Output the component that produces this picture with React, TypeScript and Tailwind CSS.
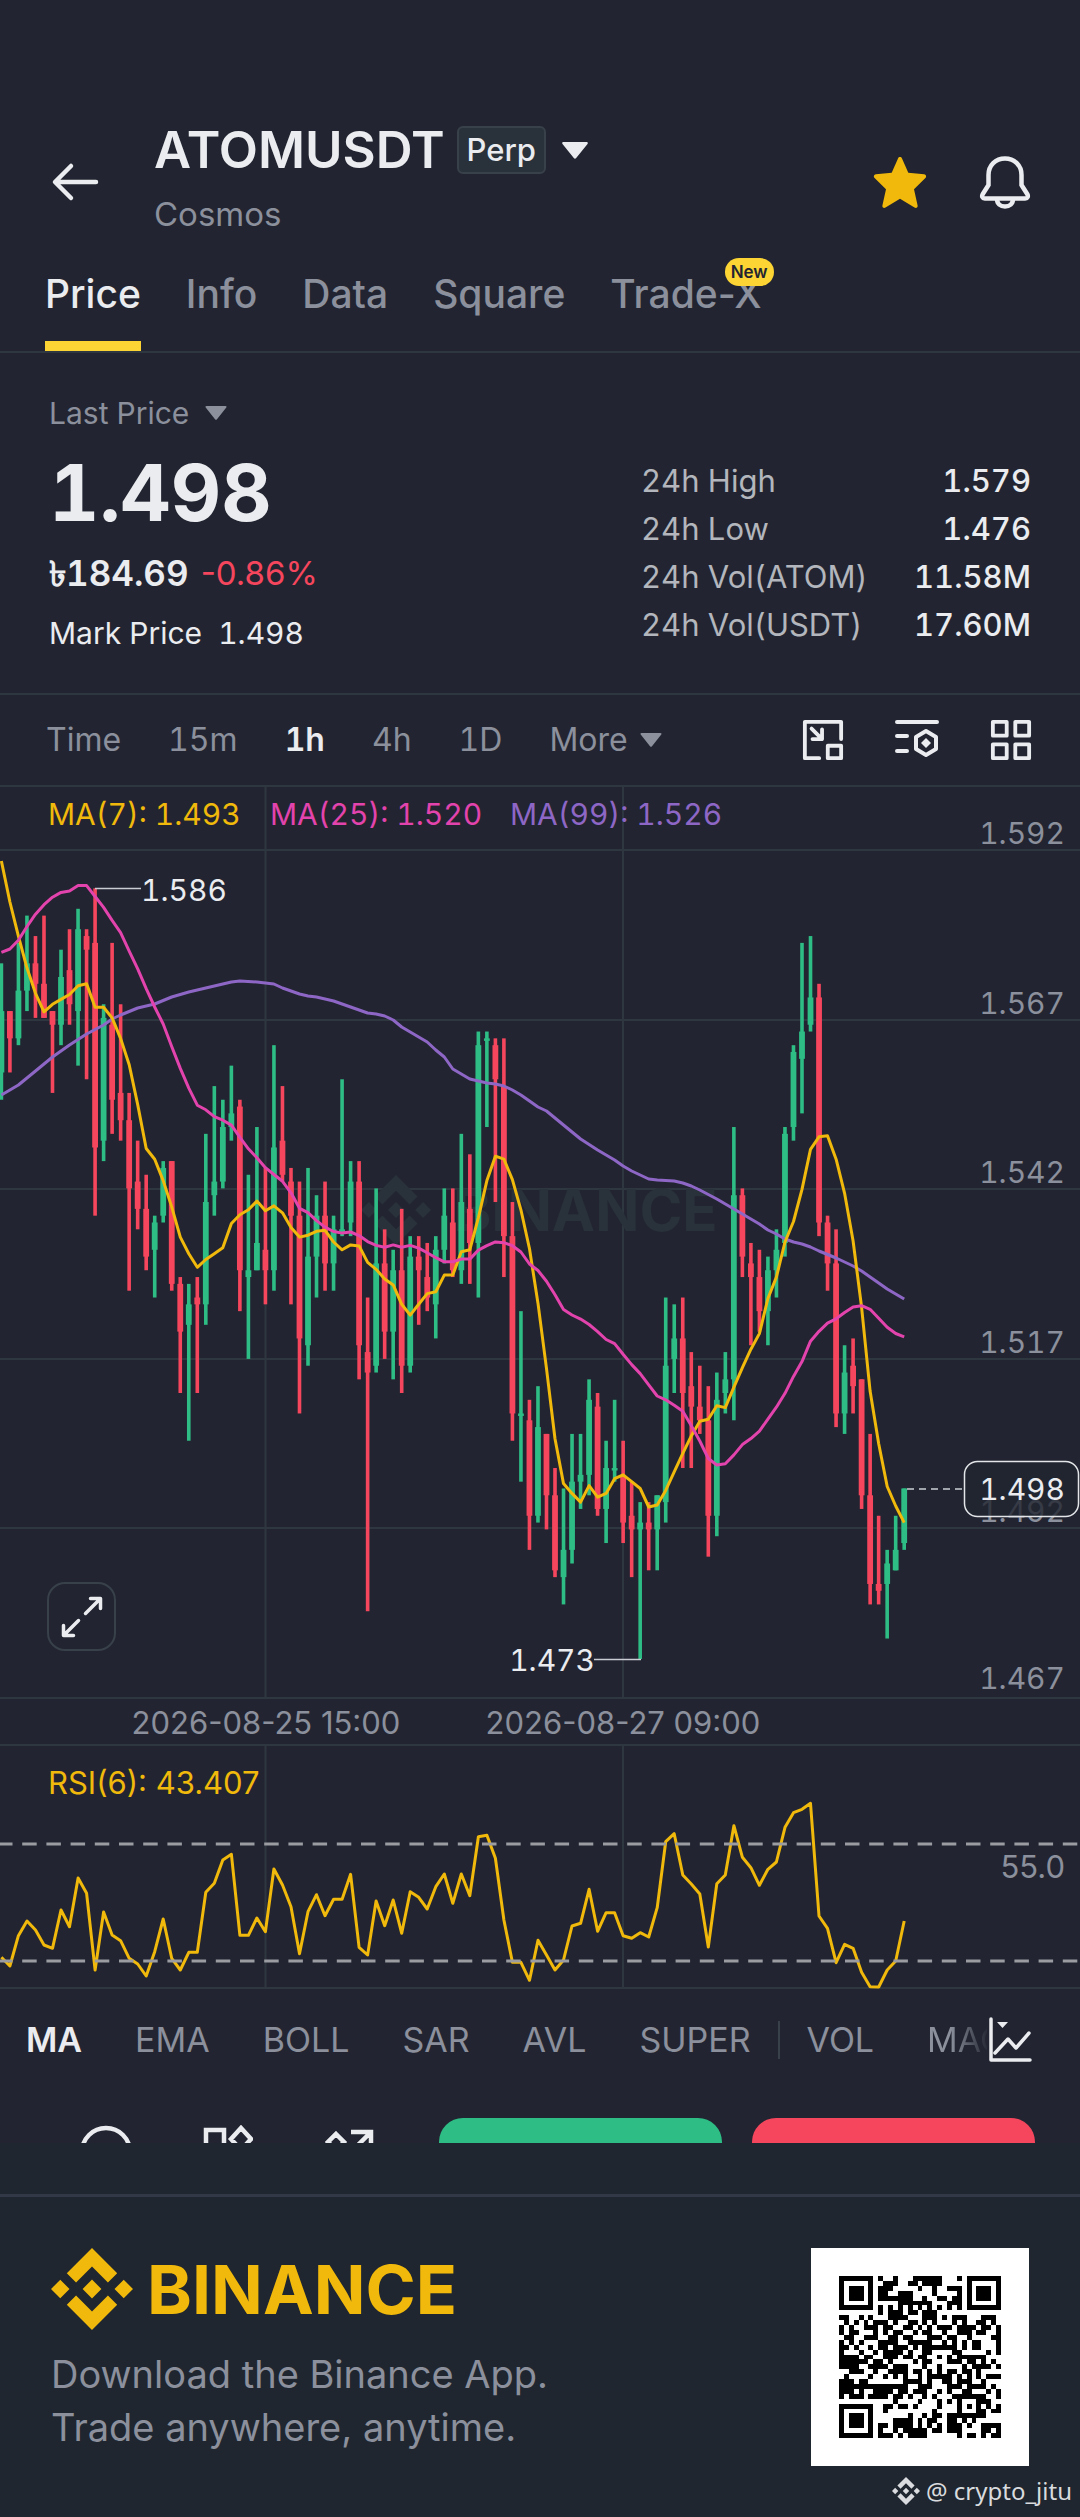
import React from "react";

type Candle = [up: 0 | 1, high: number, top: number, bottom: number, low: number];

/* Hourly candles; prices are counted in ticks of 0.001 below 1.592. */
const candles: Candle[] = [
  [1, 17, 24, 33, 37], [0, 24, 24, 28, 33], [1, 14, 21, 28, 29], [1, 10, 17, 21, 24], [0, 13, 17, 20, 25],
  [0, 10, 20, 25, 25], [0, 24, 24, 26, 36], [1, 15, 19, 26, 29], [0, 12, 18, 23, 26], [1, 9, 12, 24, 32],
  [0, 12, 13, 15, 34], [0, 6, 14, 44, 54], [1, 23, 25, 43, 46], [0, 14, 26, 37, 42], [0, 23, 36, 40, 43],
  [0, 36, 40, 50, 65], [0, 43, 49, 53, 56], [0, 48, 53, 60, 62], [1, 54, 55, 59, 66], [1, 46, 47, 54, 55],
  [0, 46, 46, 64, 65], [0, 63, 64, 71, 80], [1, 64, 67, 70, 87], [0, 63, 66, 67, 80], [1, 42, 52, 67, 70],
  [1, 35, 49, 51, 54], [1, 37, 41, 49, 50], [1, 32, 39, 41, 43], [0, 37, 38, 62, 68], [1, 48, 62, 63, 75],
  [1, 41, 58, 62, 62], [0, 47, 59, 62, 67], [1, 29, 44, 62, 65], [0, 35, 43, 48, 49], [0, 47, 49, 54, 67],
  [0, 49, 54, 72, 83], [1, 47, 60, 73, 76], [1, 51, 54, 60, 66], [0, 49, 54, 61, 65], [1, 54, 56, 61, 65],
  [1, 34, 56, 56, 57], [1, 46, 49, 55, 57], [0, 46, 49, 73, 78], [0, 66, 74, 77, 112], [1, 50, 61, 76, 77],
  [0, 56, 61, 71, 75], [1, 59, 62, 71, 78], [0, 53, 62, 76, 80], [1, 57, 60, 76, 77], [0, 57, 60, 62, 70],
  [0, 58, 63, 66, 68], [1, 57, 59, 67, 72], [1, 50, 54, 59, 61], [0, 50, 55, 62, 63], [1, 42, 52, 62, 64],
  [0, 45, 53, 58, 64], [1, 27, 29, 58, 66], [1, 27, 28, 28, 41], [0, 28, 29, 34, 52], [0, 28, 35, 57, 63],
  [0, 52, 57, 83, 87], [1, 68, 83, 83, 93], [0, 81, 84, 98, 103], [1, 79, 85, 98, 99], [0, 86, 86, 95, 100],
  [0, 91, 95, 106, 107], [1, 94, 103, 107, 111], [1, 86, 93, 103, 105], [1, 86, 92, 93, 97], [1, 78, 81, 92, 95],
  [0, 80, 82, 97, 98], [1, 87, 91, 97, 102], [1, 81, 91, 91, 93], [0, 87, 92, 99, 102], [0, 93, 98, 100, 107],
  [1, 96, 99, 100, 119], [0, 96, 99, 100, 106], [1, 95, 95, 100, 106], [1, 66, 76, 96, 99], [1, 67, 72, 75, 80],
  [0, 66, 72, 80, 91], [0, 74, 79, 82, 91], [0, 76, 82, 84, 86], [0, 79, 84, 98, 104], [1, 77, 81, 98, 101],
  [1, 74, 78, 80, 83], [1, 41, 51, 78, 84], [0, 50, 51, 60, 63], [0, 58, 61, 63, 73], [0, 59, 63, 68, 71],
  [1, 60, 62, 68, 73], [1, 56, 59, 62, 66], [1, 41, 42, 58, 60], [1, 29, 30, 41, 43], [1, 14, 27, 31, 39],
  [1, 13, 22, 26, 27], [0, 20, 22, 55, 57], [0, 54, 55, 61, 65], [0, 56, 61, 83, 85], [1, 73, 77, 83, 86],
  [0, 72, 76, 79, 83], [0, 78, 78, 95, 97], [0, 86, 95, 108, 111], [0, 98, 108, 109, 111], [1, 103, 105, 108, 116],
  [1, 98, 103, 106, 106], [1, 94, 94, 102, 103],
];

const ma7Start = [2, 8, 13, 17.7, 21.4, 24.1];
const ma25Start = [
  15.4, 14.9, 13.6, 11.6, 9.8, 8.4, 7.3, 6.6, 6.4, 5.6, 5.6, 7.2, 8.8, 10.7, 12.5, 15.2, 17.8, 20.7, 23.4, 25.9, 29.2,
  32.4, 35.3, 37.8,
];

/* Long average as [candle index, chart y]. */
const ma99: [number, number][] = [
  [0, 1095], [2, 1085], [4, 1071], [6, 1057], [8, 1045], [10, 1034], [12, 1025], [13, 1019], [14, 1015], [16, 1008],
  [18, 1004], [20, 997], [22, 992], [24, 988], [26, 984], [27, 982], [28, 981], [30, 982], [32, 984], [33, 988],
  [34, 991], [35, 994], [36, 996], [37, 997], [39, 1001], [41, 1007], [43, 1013], [44, 1014], [45, 1016], [46, 1020],
  [47, 1027], [48, 1032], [50, 1042], [51, 1050], [52, 1057], [53, 1069], [54, 1074], [55, 1079], [56, 1081],
  [57, 1083], [58, 1084], [59, 1086], [60, 1090], [61, 1095], [62, 1101], [63, 1107], [64, 1111], [66, 1125],
  [68, 1139], [70, 1150], [72, 1160], [73, 1166], [74, 1171], [76, 1179], [77, 1180], [79, 1181], [80, 1183],
  [81, 1186], [82, 1190], [84, 1199], [86, 1209], [88, 1219], [89, 1224], [90, 1230], [91, 1234], [92, 1239],
  [93, 1242], [94, 1244], [95, 1247], [96, 1251], [98, 1258], [100, 1266], [101, 1271], [102, 1277], [103, 1283],
  [104, 1289], [105, 1294], [106, 1299],
];

/* RSI curve, three units to a pixel, measured down from y = 1740. */
const rsi = [
  652, 678, 587, 543, 570, 615, 625, 510, 560, 414, 460, 690, 516, 585, 602, 655, 672, 708, 635, 537, 655, 690, 637,
  637, 457, 430, 360, 343, 586, 586, 534, 575, 387, 435, 500, 641, 515, 464, 527, 478, 478, 403, 622, 645, 483, 557,
  480, 580, 455, 472, 507, 440, 402, 490, 402, 467, 290, 286, 355, 540, 667, 667, 721, 601, 645, 690, 660, 558, 550,
  448, 574, 518, 518, 587, 595, 578, 591, 503, 305, 281, 405, 432, 462, 621, 431, 405, 257, 352, 383, 436, 388, 366,
  262, 218, 208, 190, 528, 565, 668, 613, 625, 697, 740, 741, 690, 663, 543,
];

const xOf = (i: number) => 1.4 + i * 8.517;
const yOf = (d: number) => 847.4 + d * 6.82;
const closeOf = (c: Candle) => (c[0] ? c[2] : c[3]);

function average(period: number, start: number[]) {
  return candles
    .map((_, i) => {
      let v = start[i];
      if (v === undefined) {
        const from = Math.max(0, i - period + 1);
        const part = candles.slice(from, i + 1);
        v = part.reduce((s, c) => s + closeOf(c), 0) / part.length;
      }
      return `${xOf(i).toFixed(1)},${yOf(v).toFixed(1)}`;
    })
    .join(" ");
}

const ma7Points = average(7, ma7Start);
const ma25Points = average(25, ma25Start);
const ma99Points = ma99.map(([i, y]) => `${xOf(i).toFixed(1)},${y}`).join(" ");
const rsiPoints = rsi.map((v, i) => `${xOf(i).toFixed(1)},${(1740 + v / 3).toFixed(1)}`).join(" ");

/* Grid line y, label baseline, label. */
const gridRows: [number, number, string][] = [
  [850, 844, "1.592"], [1020, 1014, "1.567"], [1189, 1183, "1.542"],
  [1359, 1353, "1.517"], [1528, 1522, "1.492"], [1698, 1689, "1.467"],
];

function BinanceMark({ className }: { className?: string }) {
  return (
    <svg viewBox="0 0 126.6 126.6" className={className} fill="currentColor" aria-hidden="true">
      <path d="M38.7 53.2 63.3 28.6l24.6 24.6 14.3-14.3L63.3 0 24.4 38.9zM0 63.3 14.3 49l14.3 14.3-14.3 14.3zM38.7 73.4 63.3 98l24.6-24.6 14.3 14.3-38.9 38.9-38.9-38.9zM98 63.3 112.3 49l14.3 14.3-14.3 14.3zM77.8 63.3 63.3 48.8 48.8 63.3l14.5 14.5z" />
    </svg>
  );
}

function Caret({ className }: { className?: string }) {
  return (
    <svg viewBox="0 0 26 17" className={className} fill="currentColor" aria-hidden="true">
      <path d="M1.500 0h23c1.200 0 1.700 1 1 1.900L14.200 16c-.7.9-1.700.9-2.400 0L.5 1.900C-.2 1 .3 0 1.500 0z" />
    </svg>
  );
}

function Header() {
  return (
    <header className="flex items-center px-12 pt-[118px]">
      <button type="button" aria-label="Back" className="w-[106px] shrink-0">
        <svg viewBox="0 0 54 44" className="h-11 w-[54px]" fill="none" stroke="currentColor" strokeWidth="4.500" strokeLinecap="round" strokeLinejoin="round">
          <path d="M48 22H8M23 6 7 22l16 16" />
        </svg>
      </button>
      <div className="flex-1 pb-2">
        <div className="flex h-16 items-center">
          <h1 className="text-[51px] leading-[64px] font-semibold">ATOMUSDT</h1>
          <span className="ml-3 rounded-md border-2 border-[#38404a] bg-[#29313a] px-2 text-[31px] leading-[44px] font-medium">
            Perp
          </span>
          <button type="button" aria-label="Choose pair" className="ml-4">
            <Caret className="h-[17px] w-[26px]" />
          </button>
        </div>
        <p className="mt-2 text-[33px] leading-[48px] text-[#8b909c]">Cosmos</p>
      </div>
      <button type="button" aria-label="Favourite" className="text-[#f0b90b]">
        <svg viewBox="0 0 54 54" className="size-[54px]" fill="currentColor">
          <path d="M25 3.500c.8-1.900 3.200-1.900 4 0l6.300 14.300 15.800 1.500c2 .2 2.700 2.500 1.300 3.800L41 34.300l3.600 16.200c.4 1.900-1.500 3-3.100 2L27 43.700 12.500 52.500c-1.600 1-3.500-.1-3.100-2L13 34.300 1.600 23.100C.2 21.800.9 19.500 2.900 19.300l15.800-1.500z" />
        </svg>
      </button>
      <button type="button" aria-label="Price alert" className="ml-[51px]">
        <svg viewBox="0 0 54 54" className="size-[54px]" fill="none" stroke="currentColor" strokeWidth="4.500">
          <path d="M27 3.500C17.500 3.500 10.500 10.500 10.500 20v10L4.800 39c-1.400 2.300-.4 4.500 2 4.500h40.400c2.400 0 3.400-2.200 2-4.500L43.500 30V20C43.500 10.500 36.500 3.500 27 3.500z" />
          <path d="M19 44c0 5 3.500 7.500 8 7.500s8-2.500 8-7.500" />
        </svg>
      </button>
    </header>
  );
}

function Tabs() {
  return (
    <nav className="flex gap-[45px] border-b-2 border-[#2e3640] px-[45px] text-[39px] leading-[48px] font-medium text-[#8b909c]">
      <button type="button" className="border-b-[10px] border-[#fcd535] pt-6 pb-[23px] text-[#eaecef]">Price</button>
      <button type="button" className="pt-6 pb-[33px]">Info</button>
      <button type="button" className="pt-6 pb-[33px]">Data</button>
      <button type="button" className="pt-6 pb-[33px]">Square</button>
      <button type="button" className="relative pt-6 pb-[33px]">
        Trade-X
        <span className="absolute top-3 -right-3 rounded-full bg-[#fcd535] px-[6px] text-[17px] leading-[28px] font-semibold text-[#222531]">
          New
        </span>
      </button>
    </nav>
  );
}

const stats = [
  ["24h High", "1.579"],
  ["24h Low", "1.476"],
  ["24h Vol(ATOM)", "11.58M"],
  ["24h Vol(USDT)", "17.60M"],
];

function PriceSummary() {
  return (
    <section className="flex justify-between border-b-2 border-[#2e3640] px-[49px] py-10 tabular-nums">
      <div>
        <button type="button" className="flex items-center text-[30px] leading-[40px] text-[#8b909c]">
          Last Price
          <Caret className="ml-4 h-[14px] w-[22px]" />
        </button>
        <p className="mt-4 text-[78px] leading-[88px] font-bold">1.498</p>
        <p className="mt-3 flex gap-3 leading-[48px]">
          <span className="text-[35px] font-semibold">৳184.69</span>
          <span className="text-[33px] text-[#f6465d] proportional-nums">-0.86%</span>
        </p>
        <p className="mt-4 text-[30px] leading-[40px]">Mark Price&nbsp; 1.498</p>
      </div>
      <dl className="mt-16 w-[390px] text-[31px] leading-[48px]">
        {stats.map(([label, value]) => (
          <div key={label} className="flex justify-between">
            <dt className="text-[#b3b6bc]">{label}</dt>
            <dd className="font-medium">{value}</dd>
          </div>
        ))}
      </dl>
    </section>
  );
}

function Timeframes() {
  return (
    <div className="flex h-[92px] items-center border-b-2 border-[#2e3640] pr-12 pl-[46px] text-[32px] leading-[40px] text-[#8b909c] tabular-nums">
      <div className="flex flex-1 gap-[47px]">
        <button type="button">Time</button>
        <button type="button">15m</button>
        <button type="button" className="font-semibold text-[#eaecef]">1h</button>
        <button type="button">4h</button>
        <button type="button">1D</button>
        <button type="button" className="flex items-center">
          More
          <Caret className="ml-3 h-[14px] w-[22px]" />
        </button>
      </div>
      <div className="flex items-center gap-[51px] text-[#eaecef]">
        <button type="button" aria-label="Floating window">
          <svg viewBox="0 0 44 44" className="size-[42px]" fill="none" stroke="currentColor" strokeWidth="4" strokeLinecap="round" strokeLinejoin="round">
            <path d="M41 21V3H3v38h15M27 28h14v13H27zM10 10l11 11M21 11v10H11" />
          </svg>
        </button>
        <button type="button" aria-label="Chart settings">
          <svg viewBox="0 0 44 44" className="size-11" fill="none" stroke="currentColor" strokeWidth="4" strokeLinecap="round" strokeLinejoin="round">
            <path d="M2 4h40M2 18h10M2 33h10M31 13l10 6v12l-10 6-10-6V19z" />
            <path d="m31 20 5 5-5 5-5-5z" fill="currentColor" stroke="none" />
          </svg>
        </button>
        <button type="button" aria-label="Layout">
          <svg viewBox="0 0 44 44" className="size-[42px]" fill="none" stroke="currentColor" strokeWidth="4" strokeLinejoin="round">
            <path d="M3 3h14.500v14.500H3zM26.500 3H41v14.500H26.500zM3 26.500h14.500V41H3zM26.500 26.500H41V41H26.500z" />
          </svg>
        </button>
      </div>
    </div>
  );
}

function PriceChart() {
  return (
    <section className="relative" aria-label="Price chart">
      <svg viewBox="0 787 1080 959" className="block w-full font-[Inter,sans-serif] text-[30px] tabular-nums">
        <g stroke="#2e3640" strokeWidth="2">
          {gridRows.map(([y]) => (
            <path key={y} d={`M0 ${y}H1080`} />
          ))}
          <path d="M265.500 787V1698M623 787V1698M0 1745H1080" />
        </g>
        <g fill="#29313a">
          <svg x="361" y="1175" width="70" height="70" viewBox="0 0 126.6 126.6">
            <path d="M38.7 53.2 63.3 28.6l24.6 24.6 14.3-14.3L63.3 0 24.4 38.9zM0 63.3 14.3 49l14.3 14.3-14.3 14.3zM38.7 73.4 63.3 98l24.6-24.6 14.3 14.3-38.9 38.9-38.9-38.9zM98 63.3 112.3 49l14.3 14.3-14.3 14.3zM77.8 63.3 63.3 48.8 48.8 63.3l14.5 14.5z" />
          </svg>
          <text x="453" y="1231" className="text-[58px] font-bold">BINANCE</text>
        </g>
        {candles.map(([up, high, top, bottom, low], i) => (
          <g key={i} fill={up ? "#2ebd85" : "#f6465d"}>
            <rect x={xOf(i) - 1.8} y={yOf(high)} width="3.600" height={(low - high) * 6.82} />
            <rect x={xOf(i) - 2.9} y={yOf(top)} width="5.800" height={Math.max(2.5, (bottom - top) * 6.82)} />
          </g>
        ))}
        <g fill="none" strokeWidth="3" strokeLinejoin="round">
          <polyline points={ma99Points} stroke="#8e67c6" />
          <polyline points={ma7Points} stroke="#f0b90b" />
          <polyline points={ma25Points} stroke="#e243ac" />
        </g>
        <text x="48" y="825" fill="#f0b90b">MA(7): 1.493</text>
        <text x="270" y="825" fill="#e243ac">MA(25): 1.520</text>
        <text x="510" y="825" fill="#8e67c6">MA(99): 1.526</text>
        <g fill="#8b909c" textAnchor="end">
          {gridRows.map(([, baseline, label]) => (
            <text key={label} x="1065" y={baseline}>{label}</text>
          ))}
        </g>
        <g stroke="#c9ccd2" strokeWidth="1.500" fill="none">
          <path d="M95 888.500H141M594 1659.500H641" />
          <path d="M907 1489H963" strokeDasharray="7 5" stroke="#a0a4ab" strokeWidth="2" />
          <rect x="964.500" y="1461.500" width="114" height="55" rx="13" fill="#222531" fillOpacity="0.800" stroke="#e3e5e8" />
        </g>
        <g fill="#eaecef">
          <text x="141" y="901">1.586</text>
          <text x="595" y="1671" textAnchor="end">1.473</text>
          <text x="1065" y="1500" textAnchor="end">1.498</text>
        </g>
        <g fill="#8b909c" textAnchor="middle" className="text-[31px] proportional-nums">
          <text x="266" y="1734">2026-08-25 15:00</text>
          <text x="623" y="1734">2026-08-27 09:00</text>
        </g>
      </svg>
      <button
        type="button"
        aria-label="Full screen"
        className="absolute bottom-[95px] left-[47px] flex size-[69px] items-center justify-center rounded-[18px] border-2 border-[#38404a]"
      >
        <svg viewBox="0 0 42 42" className="size-[42px]" fill="none" stroke="currentColor" strokeWidth="3.500" strokeLinecap="round" strokeLinejoin="round">
          <path d="M24.500 17.500 39 3M29.500 2.500h10v10M17.500 24.500 3 39M12.500 39.500h-10v-10" />
        </svg>
      </button>
    </section>
  );
}

function RsiChart() {
  return (
    <section aria-label="RSI">
      <svg viewBox="0 1746 1080 243" className="block w-full font-[Inter,sans-serif] text-[31px]">
        <path d="M265.500 1746V1988M623 1746V1988M0 1988H1080" stroke="#2e3640" strokeWidth="2" />
        <polyline points={rsiPoints} fill="none" stroke="#f0b90b" strokeWidth="3" strokeLinejoin="round" />
        <path d="M-2 1844H1080M-2 1961H1080" stroke="#9a9ca1" strokeWidth="3" strokeDasharray="14.500 9.700" />
        <text x="48" y="1794" fill="#f0b90b">RSI(6): 43.407</text>
        <text x="1065" y="1878" fill="#8b909c" textAnchor="end">55.0</text>
      </svg>
    </section>
  );
}

function Indicators() {
  return (
    <div className="flex h-[102px] items-center pr-[47px] pl-[26px] text-[34px] leading-[40px] text-[#8b909c]">
      <div className="flex min-w-0 flex-1 items-center gap-[27px] overflow-hidden">
        <div className="flex gap-[53px]">
          <button type="button" className="font-semibold text-[#eaecef]">MA</button>
          <button type="button">EMA</button>
          <button type="button">BOLL</button>
          <button type="button">SAR</button>
          <button type="button">AVL</button>
          <button type="button">SUPER</button>
        </div>
        <div className="h-[38px] w-[2px] shrink-0 bg-[#38404a]" />
        <div className="flex gap-[53px]">
          <button type="button">VOL</button>
          <button
            type="button"
            className="bg-linear-to-r from-[#8b909c] from-30% to-transparent to-80% bg-clip-text text-transparent"
          >
            MAC
          </button>
        </div>
      </div>
      <button type="button" aria-label="Indicator settings" className="shrink-0 text-[#eaecef]">
        <svg viewBox="0 0 46 46" className="size-[46px]" fill="none" stroke="currentColor" strokeWidth="3.500" strokeLinecap="round" strokeLinejoin="round">
          <path d="M4 2v41h39M8 36l13-14 8 9 13-15" />
          <path d="M10 5h11l-5.500 6z" fill="currentColor" stroke="none" />
        </svg>
      </button>
    </div>
  );
}

function ActionBar() {
  return (
    <div className="flex h-[52px] items-start overflow-hidden px-[45px] pt-[27px]">
      <div className="grid w-[366px] shrink-0 grid-cols-3 justify-items-center pt-[7px]">
        <button type="button" aria-label="More">
          <svg viewBox="0 0 50 50" className="size-[50px]" fill="none" stroke="currentColor" strokeWidth="4.500">
            <circle cx="25" cy="27" r="24" />
          </svg>
        </button>
        <button type="button" aria-label="Tools">
          <svg viewBox="0 0 50 50" className="size-[50px]" fill="none" stroke="currentColor" strokeWidth="4.500">
            <path d="M3 5h18v17H3zM3 29h18v17H3zM28 29h18v17H28zM38 3l10 11-10 11-10-11z" />
          </svg>
        </button>
        <button type="button" aria-label="Leverage">
          <svg viewBox="0 0 50 50" className="size-[50px]" fill="none" stroke="currentColor" strokeWidth="4.500">
            <path d="M11 9l8 8-8 8-8-8zM26 7h20v20M45 8 8 45" />
          </svg>
        </button>
      </div>
      <div className="ml-7 flex flex-1 gap-[30px]">
        <button type="button" aria-label="Long" className="h-24 flex-1 rounded-3xl bg-[#2ebd85]" />
        <button type="button" aria-label="Short" className="h-24 flex-1 rounded-3xl bg-[#f6465d]" />
      </div>
    </div>
  );
}

const QR_SIZE = 33;

function qrPath() {
  let seed = 77;
  let d = "";
  const finder = (r: number, c: number) => {
    const ring = Math.max(Math.abs(r - 3), Math.abs(c - 3));
    return ring === 3 || ring <= 1;
  };
  for (let r = 0; r < QR_SIZE; r++) {
    for (let c = 0; c < QR_SIZE; c++) {
      seed = (seed * 1103515245 + 12345) % 2147483648;
      let on = seed / 2147483648 < 0.52;
      const right = c >= QR_SIZE - 8;
      const low = r >= QR_SIZE - 8;
      if ((r < 8 && (c < 8 || right)) || (low && c < 8)) {
        const rr = low ? r - (QR_SIZE - 7) : r;
        const cc = right ? c - (QR_SIZE - 7) : c;
        on = rr >= 0 && rr < 7 && cc >= 0 && cc < 7 && finder(rr, cc);
      } else if (Math.abs(r - 26) <= 2 && Math.abs(c - 26) <= 2) {
        on = Math.max(Math.abs(r - 26), Math.abs(c - 26)) !== 1;
      } else if (r === 6 || c === 6) {
        on = (r + c) % 2 === 0;
      }
      if (on) d += `M${c} ${r}h1v1h-1z`;
    }
  }
  return d;
}

function Footer() {
  return (
    <footer className="bg-[#1f262f] pt-[51px]">
      <div className="flex justify-between border-t-[3px] border-[#323845] px-[51px] pt-[51px]">
        <div>
          <div className="flex items-center gap-[14px] text-[#f0b90b]">
            <BinanceMark className="size-[82px]" />
            <span className="text-[68px] leading-[82px] font-bold">BINANCE</span>
          </div>
          <p className="mt-[18px] text-[38px] leading-[53px] text-[#8b909c]">
            Download the Binance App.
            <br />
            Trade anywhere, anytime.
          </p>
        </div>
        <div className="size-[218px] shrink-0 bg-white p-7">
          <svg viewBox="0 0 33 33" className="size-full" shapeRendering="crispEdges" role="img" aria-label="QR code">
            <path d={qrPath()} fill="#000" />
          </svg>
        </div>
      </div>
      <div className="mt-[11px] flex items-center justify-end gap-[6px] pr-2 pb-3 font-['Noto_Sans',sans-serif] text-[24px] leading-[28px] text-[#d9dbde]">
        <BinanceMark className="size-7" />
        <span>@ crypto_jitu</span>
      </div>
    </footer>
  );
}

export default function App() {
  return (
    <main className="min-h-screen bg-[#222531] font-[Inter,sans-serif] text-[#eaecef]">
      <Header />
      <Tabs />
      <PriceSummary />
      <Timeframes />
      <PriceChart />
      <RsiChart />
      <Indicators />
      <ActionBar />
      <Footer />
    </main>
  );
}
